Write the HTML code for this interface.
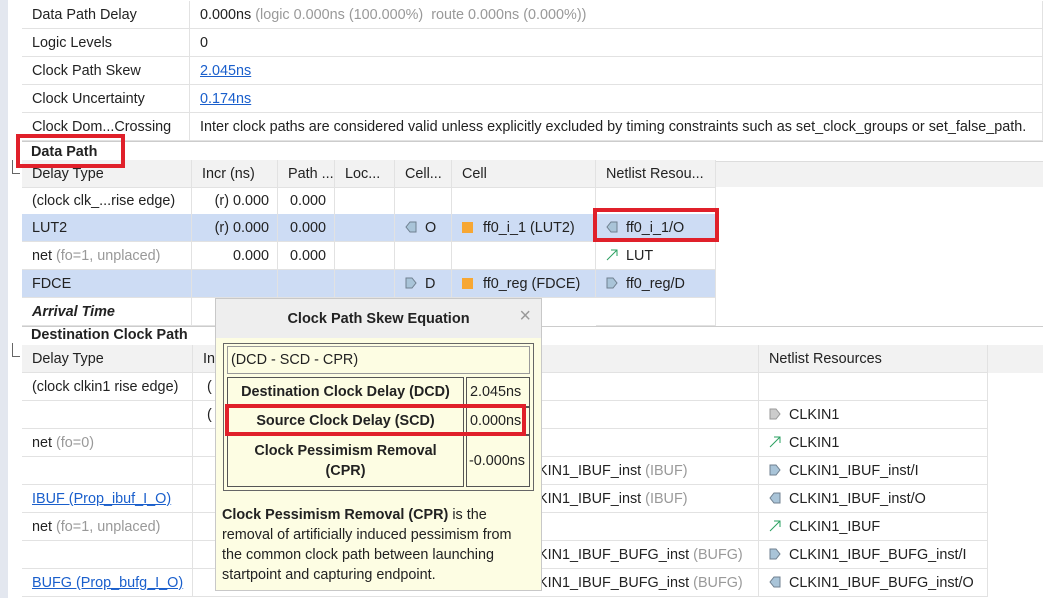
<!DOCTYPE html>
<html><head><meta charset="utf-8"><style>
*{box-sizing:border-box;margin:0;padding:0}
body{width:1043px;height:598px;overflow:hidden;background:#fff;font-family:"Liberation Sans",sans-serif;font-size:14.4px;color:#222;position:relative}
.a{position:absolute;white-space:nowrap}
.c{position:absolute;height:28px;line-height:28px;padding-left:10px;border-right:1px solid #e2e2e2;border-bottom:1px solid #e2e2e2;white-space:nowrap;overflow:hidden}
.r{text-align:right;padding-right:8px;padding-left:0}
.g{color:#999}
.lnk{color:#1a5fcc;text-decoration:underline}
.hd{background:#f2f2f2}
.sel{background:#cddcf4}
.red{position:absolute;border:4px solid #e0202a}
.pin{display:inline-block;vertical-align:-1px;margin-right:8px}
.sq{display:inline-block;width:11px;height:11px;background:#f7a733;margin-right:10px;vertical-align:-1px}
</style></head><body>
<div class="a" style="left:0;top:0;width:8px;height:598px;background:#e3e7ef"></div>

<!-- top summary -->
<div class="c" style="left:22px;top:1px;width:168px">Data Path Delay</div><div class="c" style="left:190px;top:1px;width:853px">0.000ns <span class="g">(logic 0.000ns (100.000%)&nbsp; route 0.000ns (0.000%))</span></div>
<div class="c" style="left:22px;top:29px;width:168px">Logic Levels</div><div class="c" style="left:190px;top:29px;width:853px">0</div>
<div class="c" style="left:22px;top:57px;width:168px">Clock Path Skew</div><div class="c" style="left:190px;top:57px;width:853px"><span class="lnk">2.045ns</span></div>
<div class="c" style="left:22px;top:85px;width:168px">Clock Uncertainty</div><div class="c" style="left:190px;top:85px;width:853px"><span class="lnk">0.174ns</span></div>
<div class="c" style="left:22px;top:113px;width:168px">Clock Dom...Crossing</div><div class="c" style="left:190px;top:113px;width:853px">Inter clock paths are considered valid unless explicitly excluded by timing constraints such as set_clock_groups or set_false_path.</div>

<!-- Data path -->
<div class="a" style="left:22px;top:141px;width:1021px;height:21px;border-bottom:1px solid #ddd;border-top:1px solid #ccc"></div>
<div class="a" style="left:31px;top:142px;font-weight:bold;line-height:20px">Data Path</div>
<div class="a" style="left:12px;top:160px;width:1px;height:14px;background:#666"></div>
<div class="a" style="left:12px;top:173px;width:8px;height:1px;background:#666"></div>
<div class="a" style="left:22px;top:162px;width:1021px;height:25px;background:#f2f2f2"></div>
<div class="c hd" style="left:22px;top:160px;width:170px">Delay Type</div>
<div class="c hd" style="left:192px;top:160px;width:86px">Incr (ns)</div>
<div class="c hd" style="left:278px;top:160px;width:57px">Path ...</div>
<div class="c hd" style="left:335px;top:160px;width:60px">Loc...</div>
<div class="c hd" style="left:395px;top:160px;width:57px">Cell...</div>
<div class="c hd" style="left:452px;top:160px;width:144px">Cell</div>
<div class="c hd" style="left:596px;top:160px;width:120px">Netlist Resou...</div>

<div class="c" style="left:22px;top:187px;width:170px">(clock clk_...rise edge)</div>
<div class="c r" style="left:192px;top:187px;width:86px">(r) 0.000</div>
<div class="c r" style="left:278px;top:187px;width:57px">0.000</div>
<div class="c" style="left:335px;top:187px;width:60px"></div><div class="c" style="left:395px;top:187px;width:57px"></div><div class="c" style="left:452px;top:187px;width:144px"></div><div class="c" style="left:596px;top:187px;width:120px"></div>

<div class="c sel" style="left:22px;top:214px;width:170px">LUT2</div>
<div class="c r sel" style="left:192px;top:214px;width:86px">(r) 0.000</div>
<div class="c r sel" style="left:278px;top:214px;width:57px">0.000</div>
<div class="c sel" style="left:335px;top:214px;width:60px"></div>
<div class="c sel" style="left:395px;top:214px;width:57px"><svg class="pin" width="12" height="12"><path d="M11 1H5L1 6L5 11H11Z" fill="#a9c4d8" stroke="#708090"/></svg>O</div>
<div class="c sel" style="left:452px;top:214px;width:144px"><span class="sq"></span>ff0_i_1 (LUT2)</div>
<div class="c sel" style="left:596px;top:214px;width:120px"><svg class="pin" width="12" height="12"><path d="M11 1H5L1 6L5 11H11Z" fill="#a9c4d8" stroke="#708090"/></svg>ff0_i_1/O</div>

<div class="c" style="left:22px;top:242px;width:170px">net <span class="g">(fo=1, unplaced)</span></div>
<div class="c r" style="left:192px;top:242px;width:86px">0.000</div>
<div class="c r" style="left:278px;top:242px;width:57px">0.000</div>
<div class="c" style="left:335px;top:242px;width:60px"></div><div class="c" style="left:395px;top:242px;width:57px"></div><div class="c" style="left:452px;top:242px;width:144px"></div>
<div class="c" style="left:596px;top:242px;width:120px"><svg class="pin" width="12" height="12"><path d="M1 11L11 1M5 1H11V7" fill="none" stroke="#2aa060"/></svg>LUT</div>

<div class="c sel" style="left:22px;top:270px;width:170px">FDCE</div>
<div class="c sel" style="left:192px;top:270px;width:86px"></div><div class="c sel" style="left:278px;top:270px;width:57px"></div><div class="c sel" style="left:335px;top:270px;width:60px"></div>
<div class="c sel" style="left:395px;top:270px;width:57px"><svg class="pin" width="12" height="12"><path d="M1 1H7L11 6L7 11H1Z" fill="#a9c4d8" stroke="#708090"/></svg>D</div>
<div class="c sel" style="left:452px;top:270px;width:144px"><span class="sq"></span>ff0_reg (FDCE)</div>
<div class="c sel" style="left:596px;top:270px;width:120px"><svg class="pin" width="12" height="12"><path d="M1 1H7L11 6L7 11H1Z" fill="#a9c4d8" stroke="#708090"/></svg>ff0_reg/D</div>

<div class="c" style="left:22px;top:298px;width:170px;font-weight:bold;font-style:italic">Arrival Time</div>
<div class="c" style="left:192px;top:298px;width:86px"></div><div class="c" style="left:596px;top:298px;width:120px"></div>

<!-- Destination -->
<div class="a" style="left:22px;top:326px;width:1021px;height:19px;border-top:1px solid #ccc"></div>
<div class="a" style="left:31px;top:326px;font-weight:bold;line-height:19px">Destination Clock Path</div>
<div class="a" style="left:12px;top:343px;width:1px;height:14px;background:#666"></div>
<div class="a" style="left:12px;top:356px;width:8px;height:1px;background:#666"></div>
<div class="a" style="left:22px;top:345px;width:1021px;height:28px;background:#f2f2f2"></div>
<div class="c hd" style="left:22px;top:345px;width:171px">Delay Type</div>
<div class="c hd" style="left:193px;top:345px;width:566px">In</div>
<div class="c hd" style="left:759px;top:345px;width:229px">Netlist Resources</div>

<div class="c" style="left:22px;top:373px;width:171px">(clock clkin1 rise edge)</div><div class="c" style="left:193px;top:373px;width:566px">&nbsp;(</div><div class="c" style="left:759px;top:373px;width:229px"></div>
<div class="c" style="left:22px;top:401px;width:171px"></div><div class="c" style="left:193px;top:401px;width:566px">&nbsp;(</div><div class="c" style="left:759px;top:401px;width:229px"><svg class="pin" width="12" height="12"><path d="M1 1H7L11 6L7 11H1Z" fill="#ccc" stroke="#999"/></svg>CLKIN1</div>
<div class="c" style="left:22px;top:429px;width:171px">net <span class="g">(fo=0)</span></div><div class="c" style="left:193px;top:429px;width:566px"></div><div class="c" style="left:759px;top:429px;width:229px"><svg class="pin" width="12" height="12"><path d="M1 11L11 1M5 1H11V7" fill="none" stroke="#2aa060"/></svg>CLKIN1</div>
<div class="c" style="left:22px;top:457px;width:171px"></div><div class="c" style="left:193px;top:457px;width:566px;padding-left:345px">KIN1_IBUF_inst <span class="g">(IBUF)</span></div><div class="c" style="left:759px;top:457px;width:229px"><svg class="pin" width="12" height="12"><path d="M1 1H7L11 6L7 11H1Z" fill="#a9c4d8" stroke="#708090"/></svg>CLKIN1_IBUF_inst/I</div>
<div class="c" style="left:22px;top:485px;width:171px"><span class="lnk">IBUF (Prop_ibuf_I_O)</span></div><div class="c" style="left:193px;top:485px;width:566px;padding-left:345px">KIN1_IBUF_inst <span class="g">(IBUF)</span></div><div class="c" style="left:759px;top:485px;width:229px"><svg class="pin" width="12" height="12"><path d="M11 1H5L1 6L5 11H11Z" fill="#a9c4d8" stroke="#708090"/></svg>CLKIN1_IBUF_inst/O</div>
<div class="c" style="left:22px;top:513px;width:171px">net <span class="g">(fo=1, unplaced)</span></div><div class="c" style="left:193px;top:513px;width:566px"></div><div class="c" style="left:759px;top:513px;width:229px"><svg class="pin" width="12" height="12"><path d="M1 11L11 1M5 1H11V7" fill="none" stroke="#2aa060"/></svg>CLKIN1_IBUF</div>
<div class="c" style="left:22px;top:541px;width:171px"></div><div class="c" style="left:193px;top:541px;width:566px;padding-left:345px">KIN1_IBUF_BUFG_inst <span class="g">(BUFG)</span></div><div class="c" style="left:759px;top:541px;width:229px"><svg class="pin" width="12" height="12"><path d="M1 1H7L11 6L7 11H1Z" fill="#a9c4d8" stroke="#708090"/></svg>CLKIN1_IBUF_BUFG_inst/I</div>
<div class="c" style="left:22px;top:569px;width:171px"><span class="lnk">BUFG (Prop_bufg_I_O)</span></div><div class="c" style="left:193px;top:569px;width:566px;padding-left:345px">KIN1_IBUF_BUFG_inst <span class="g">(BUFG)</span></div><div class="c" style="left:759px;top:569px;width:229px"><svg class="pin" width="12" height="12"><path d="M11 1H5L1 6L5 11H11Z" fill="#a9c4d8" stroke="#708090"/></svg>CLKIN1_IBUF_BUFG_inst/O</div>

<!-- popup -->
<div class="a" style="left:215px;top:298px;width:327px;height:293px;background:#fdfde3;border:1px solid #c8c8c8">
 <div style="height:39px;background:#eeeeee;text-align:center;line-height:40px;font-weight:bold;font-size:14.5px">Clock Path Skew Equation</div>
 <div class="a" style="right:10px;top:7px;font-size:20px;color:#999;line-height:20px">×</div>
 <div class="a" style="left:7px;top:44px;width:311px;height:148px;border:1px solid #666"></div>
 <div class="a" style="left:11px;top:47px;width:303px;height:28px;border:1px solid #999;line-height:26px;padding-left:3px">(DCD - SCD - CPR)</div>
 <div class="a" style="left:11px;top:78px;width:237px;height:30px;border:1px solid #555;text-align:center;line-height:28px;font-weight:bold">Destination Clock Delay (DCD)</div>
 <div class="a" style="left:250px;top:78px;width:64px;height:30px;border:1px solid #555;line-height:28px;padding-left:3px">2.045ns</div>
 <div class="a" style="left:11px;top:108px;width:237px;height:28px;border:1px solid #555;text-align:center;line-height:26px;font-weight:bold">Source Clock Delay (SCD)</div>
 <div class="a" style="left:250px;top:108px;width:64px;height:28px;border:1px solid #555;line-height:26px;padding-left:3px">0.000ns</div>
 <div class="a" style="left:11px;top:136px;width:237px;height:52px;border:1px solid #555;text-align:center;line-height:20px;padding-top:5px;font-weight:bold;white-space:normal">Clock Pessimism Removal<br>(CPR)</div>
 <div class="a" style="left:250px;top:136px;width:64px;height:52px;border:1px solid #555;line-height:50px;padding-left:2px">-0.000ns</div>
 <div class="a" style="left:6px;top:206px;width:298px;white-space:normal;line-height:20px"><b>Clock Pessimism Removal (CPR)</b> is the removal of artificially induced pessimism from the common clock path between launching startpoint and capturing endpoint.</div>
</div>

<!-- red boxes -->
<div class="red" style="left:16px;top:134px;width:109px;height:34px"></div>
<div class="red" style="left:593px;top:208px;width:126px;height:34px"></div>
<div class="red" style="left:225px;top:404px;width:301px;height:32px"></div>
</body></html>
